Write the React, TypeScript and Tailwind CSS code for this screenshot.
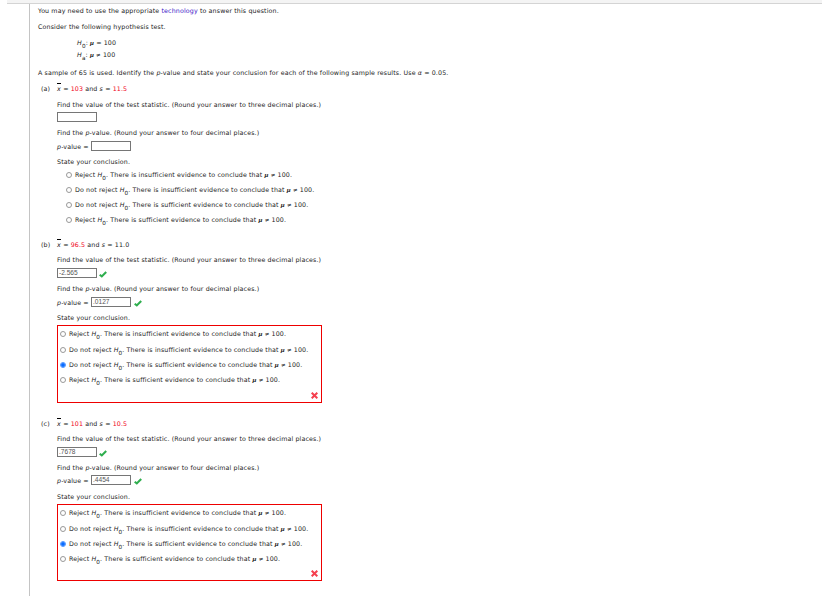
import clsx from "clsx";

type Part = {
  label: string;
  mean: string;
  s: string;
  sRed: boolean;
  stat: string;
  pValue: string;
  selected: number | null;
  graded: boolean;
  pRowClass: string;
  boxClass: string;
};

const parts: Part[] = [
  { label: "(a)", mean: "103", s: "11.5", sRed: true, stat: "", pValue: "", selected: null, graded: false, pRowClass: "h-[13px]", boxClass: "h-[70px] pl-[9px]" },
  { label: "(b)", mean: "96.5", s: "11.0", sRed: false, stat: "-2.565", pValue: ".0127", selected: 2, graded: true, pRowClass: "h-[13px]", boxClass: "h-[78px] w-[265px] border border-[#ee0000] pl-[2px]" },
  { label: "(c)", mean: "101", s: "10.5", sRed: true, stat: ".7678", pValue: ".4454", selected: 2, graded: true, pRowClass: "-mt-px h-[14px]", boxClass: "h-[77px] w-[265px] border border-[#ee0000] pl-[2px]" },
];

const options = [
  { action: "Reject", evidence: "insufficient" },
  { action: "Do not reject", evidence: "insufficient" },
  { action: "Do not reject", evidence: "sufficient" },
  { action: "Reject", evidence: "sufficient" },
];

function Sub({ children }: { children: string }) {
  return <span className="relative top-[3px] text-[5.7px]">{children}</span>;
}

function Mu() {
  return <span className="font-['Liberation_Serif',serif] text-[7px] font-bold italic">μ</span>;
}

function NotEqual() {
  return <span className="text-[5.5px]">≠</span>;
}

function Check() {
  return (
    <svg className="mt-[3px] h-[7px] w-[8px]" viewBox="0 0 8 7">
      <path d="M0.7 3.7 L2.8 5.4 L7.2 1" fill="none" stroke="#2fae4e" strokeWidth="2.1" />
    </svg>
  );
}

function Cross() {
  return (
    <svg className="h-[7px] w-[7px]" viewBox="0 0 7 7">
      <path d="M0.7 0.7 L6.3 6.3 M6.3 0.7 L0.7 6.3" fill="none" stroke="#f5404f" strokeWidth="2" />
    </svg>
  );
}

function Answer({ value }: { value: string }) {
  return (
    <input
      type="text"
      defaultValue={value}
      className="block h-[10px] w-[40px] border border-[#767676] bg-white pb-px pl-px font-['Liberation_Sans',sans-serif] text-[6.6px] leading-[7px] tracking-normal text-[#555]"
    />
  );
}

function Radio({ checked }: { checked: boolean }) {
  return (
    <span
      className={clsx(
        "flex h-[6px] w-[6px] shrink-0 items-center justify-center rounded-full border",
        checked ? "border-[#4d94ff]" : "border-[#999]"
      )}
    >
      {checked && <span className="h-[4px] w-[4px] rounded-full bg-[#0a6cff]" />}
    </span>
  );
}

function Question({ part }: { part: Part }) {
  return (
    <section className="flex">
      <div className="h-4 w-[16px] shrink-0 leading-4">{part.label}</div>
      <div>
        <div className="h-4 leading-4">
          <span className="inline-block h-[10px] w-[4px] border-t border-black align-baseline leading-[10px] italic">x</span> ={" "}
          <span className="text-[#f00020]">{part.mean}</span> and <i>s</i> ={" "}
          <span className={clsx(part.sRed && "text-[#f00020]")}>{part.s}</span>
        </div>
        <div className={clsx("h-[15px]", part.graded ? "leading-[13px]" : "leading-[15px]")}>
          Find the value of the test statistic. (Round your answer to three decimal places.)
        </div>
        <div className="flex h-[13px] gap-[2px]">
          <Answer value={part.stat} />
          {part.graded && <Check />}
        </div>
        <div className="h-4 leading-[15px]">
          Find the <i>p</i>-value. (Round your answer to four decimal places.)
        </div>
        <div className={clsx("flex", part.pRowClass)}>
          <div className="w-[34px] leading-[12px]">
            <i>p</i>-value =
          </div>
          <Answer value={part.pValue} />
          {part.graded && (
            <div className="pl-[3px]">
              <Check />
            </div>
          )}
        </div>
        <div className={clsx("leading-[15px]", part.graded ? "h-[15px]" : "h-[13px]")}>State your conclusion.</div>
        <div className={clsx("flex flex-col", part.boxClass)}>
          {options.map((option, i) => (
            <div key={i} className={clsx("flex items-center gap-[3px]", part.graded ? "h-[15.3px] first:mb-px" : "h-[15px]")}>
              <Radio checked={part.selected === i} />
              <span className="leading-[10px]">
                {option.action} <i>H</i>
                <Sub>0</Sub>. There is {option.evidence} evidence to conclude that <Mu /> <NotEqual /> 100.
              </span>
            </div>
          ))}
          {part.graded && (
            <div className="flex h-[14px] shrink-0 items-center justify-end pr-[3px]">
              <Cross />
            </div>
          )}
        </div>
      </div>
    </section>
  );
}

export default function App() {
  return (
    <div className="flex h-[596px] flex-col overflow-hidden bg-white font-['DejaVu_Sans',sans-serif] text-[6.3px] tracking-[0.13px] whitespace-nowrap text-[#222]">
      <div className="ml-[7px] h-[4px] shrink-0 border-b border-[#d4d4d4] bg-[#f4f4f4]" />
      <main className="ml-[29px] flex-1 border-l border-[#c4c4c4] pl-[8px]">
        <div className="h-[14px] leading-[14px]">
          You may need to use the appropriate <span className="text-[#3a14c8]">technology</span> to answer this question.
        </div>
        <div className="h-[19px] leading-[18px]">Consider the following hypothesis test.</div>
        <div className="pl-[39px]">
          <div className="h-[12px] leading-[12px]">
            <i>H</i>
            <Sub>0</Sub>: <Mu /> = 100
          </div>
          <div className="h-[12px] leading-[12px]">
            <i>H</i>
            <Sub>a</Sub>: <Mu /> <NotEqual /> 100
          </div>
        </div>
        <div className="h-5 leading-6">
          A sample of 65 is used. Identify the <i>p</i>-value and state your conclusion for each of the following sample results. Use <i>α</i> = 0.05.
        </div>
        <div className="flex flex-col pl-[3px]">
          <Question part={parts[0]} />
          <Question part={parts[1]} />
          <div className="h-[13px]" />
          <Question part={parts[2]} />
        </div>
      </main>
    </div>
  );
}
